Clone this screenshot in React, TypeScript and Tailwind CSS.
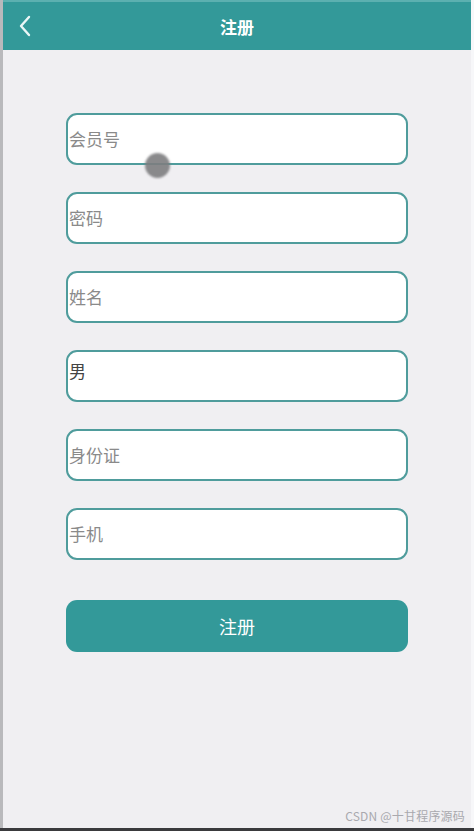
import React from 'react';

const fields = ['会员号', '密码', '姓名', '男', '身份证', '手机'];

const App: React.FC = () => {
  return (
    <div
      className="relative w-[474px] h-[831px] flex flex-col bg-[#f0eff2] overflow-hidden"
      style={{ fontFamily: '"Noto Sans CJK SC", "Noto Sans", sans-serif' }}
    >
      <div className="flex flex-1">
        <div className="w-[3px] bg-[#b9b9bc]" />
        <div className="flex-1 flex flex-col">
          {/* header */}
          <div className="h-[50px] bg-[#339999] border-t-2 border-[#5cb0b0] flex items-center relative">
            <button className="absolute left-[13px] top-[11px] text-white">
              <svg width="22" height="26" viewBox="0 0 22 26" fill="none">
                <path d="M13 4 L5 13 L13 22" stroke="#eaf6f6" strokeWidth="2.4" strokeLinecap="round" strokeLinejoin="round" />
              </svg>
            </button>
            <h1 className="flex-1 text-center text-white text-[17px] font-bold leading-none pt-[1px]">注册</h1>
          </div>

          {/* form */}
          <div className="flex flex-col items-center pt-[63px] gap-[27px]">
            {fields.map((f, i) => (
              <div
                key={f}
                className="w-[342px] h-[52px] bg-white border-2 border-[#4f9c9c] rounded-[11px] flex items-center pl-[1px]"
              >
                <span
                  className={
                    i === 3
                      ? 'text-[17px] text-[#444] -mt-[10px]'
                      : 'text-[17px] text-[#8a8a8a]'
                  }
                >
                  {f}
                </span>
              </div>
            ))}
            <button className="w-[342px] h-[52px] mt-[13px] bg-[#339999] rounded-[11px] text-white text-[18px] flex items-center justify-center">
              注册
            </button>
          </div>

          <div className="flex-1" />
          <div className="flex justify-end pr-[6px] pb-[3px]">
            <span className="text-[12px] text-[#a9a9ae] tracking-[0.2px]">CSDN @十甘程序源码</span>
          </div>
        </div>
        <div className="w-[3px] bg-[#f7f7f9]" />
      </div>
      <div className="h-[3px] bg-[#3a3a3d]" />

      {/* touch indicator */}
      <div className="absolute left-[145px] top-[153px] w-[25px] h-[25px] rounded-full bg-[#7d7d80]/90 blur-[0.8px]" />
    </div>
  );
};

export default App;
